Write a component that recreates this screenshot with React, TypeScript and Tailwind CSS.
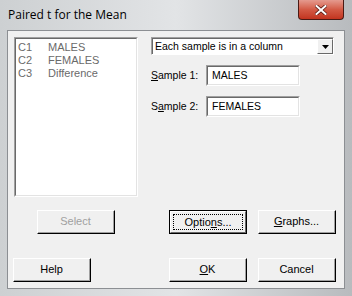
import React from "react";

const FONT = "font-['Liberation_Sans',Tahoma,sans-serif]";

function Btn({
  children,
  className = "",
  focused = false,
  disabled = false,
}: {
  children: React.ReactNode;
  className?: string;
  focused?: boolean;
  disabled?: boolean;
}) {
  return (
    <div
      className={`h-[24px] w-[78px] bg-[#f0f0f0] ${
        focused ? "border border-black" : "border-t border-l border-t-white border-l-white border-r border-b border-r-black border-b-black"
      } ${className}`}
    >
      <div
        className={`flex h-full w-full items-center justify-center ${
          focused
            ? "border-t border-l border-t-white border-l-white border-r border-b border-r-[#696969] border-b-[#696969] p-[2px]"
            : "border-r border-b border-r-[#a0a0a0] border-b-[#a0a0a0]"
        }`}
      >
        <div
          className={`flex h-full w-full items-center justify-center text-[11px] ${
            focused ? "border border-dotted border-black" : ""
          } ${disabled ? "text-[#a0a0a0]" : "text-black"}`}
        >
          {children}
        </div>
      </div>
    </div>
  );
}

function Field({ value }: { value: string }) {
  return (
    <div className="h-[21px] w-[94px] border-t border-l border-t-[#a0a0a0] border-l-[#a0a0a0] border-r border-b border-r-white border-b-white">
      <div className="flex h-full w-full items-center border-t border-l border-t-[#696969] border-l-[#696969] border-r border-b border-r-[#e3e3e3] border-b-[#e3e3e3] bg-white px-[4px] text-[10.5px] text-black">
        {value}
      </div>
    </div>
  );
}

const COLUMNS = [
  ["C1", "MALES"],
  ["C2", "FEMALES"],
  ["C3", "Difference"],
];

export default function App() {
  return (
    <div
      className={`${FONT} flex h-[296px] w-[352px] flex-col overflow-hidden bg-gradient-to-r from-[#cdd0d2] via-[#e2e4e6] to-[#b8bbbe]`}
    >
      {/* Title bar */}
      <div className="relative flex h-[30px] shrink-0 items-start pl-[8px] pt-[7px]">
        <span className="font-['Open_Sans',sans-serif] text-[12px] leading-[16px] text-black">
          Paired t for the Mean
        </span>
        <div className="absolute right-[8px] top-0 flex h-[20px] w-[46px] items-center justify-center rounded-b-[4px] border border-t-0 border-[#4a1a14] bg-gradient-to-b from-[#e49a8e] via-[#d35a45] to-[#c2331e]">
          <svg width="12" height="10" viewBox="0 0 12 10">
            <path d="M1.5 1 L10.5 9 M10.5 1 L1.5 9" stroke="#5a1a12" strokeWidth="3.6" strokeLinecap="square" />
            <path d="M1.5 1 L10.5 9 M10.5 1 L1.5 9" stroke="#ffffff" strokeWidth="2" strokeLinecap="square" />
          </svg>
        </div>
      </div>

      {/* Client area */}
      <div className="mx-[7px] flex-1 border border-[#8c8f93]">
        <div className="flex h-full flex-col bg-[#f0f0f0] pl-[6px] pt-[6px]">
          <div className="flex">
            {/* Column list */}
            <div className="h-[160px] w-[124px] border-t border-l border-t-[#a0a0a0] border-l-[#a0a0a0] border-r border-b border-r-white border-b-white">
              <div className="h-full w-full border-t border-l border-t-[#696969] border-l-[#696969] border-r border-b border-r-[#e3e3e3] border-b-[#e3e3e3] bg-white pl-[2px] pt-[2px]">
                {COLUMNS.map(([c, name]) => (
                  <div key={c} className="flex h-[13px] items-center text-[11px] text-[#6a6a6a]">
                    <span className="w-[30px]">{c}</span>
                    <span>{name}</span>
                  </div>
                ))}
              </div>
            </div>

            {/* Right column */}
            <div className="ml-[13px] flex w-[183px] flex-col">
              <div className="h-[18px] w-[183px] border-t border-l border-t-[#a0a0a0] border-l-[#a0a0a0] border-r border-b border-r-white border-b-white">
                <div className="flex h-full w-full items-center border-t border-l border-t-[#696969] border-l-[#696969] bg-white pl-[2px] text-[10.5px] text-black">
                  <span className="flex-1">Each sample is in a column</span>
                  <div className="flex h-full w-[16px] items-center justify-center border-t border-l border-t-white border-l-white border-r border-b border-r-[#696969] border-b-[#696969] bg-[#f0f0f0]">
                    <svg width="7" height="4" viewBox="0 0 7 4">
                      <path d="M0 0 H7 L3.5 4 Z" fill="#000" />
                    </svg>
                  </div>
                </div>
              </div>

              <div className="mt-[10px] flex items-center">
                <span className="w-[55px] text-[10.5px] text-black">
                  <span className="underline">S</span>ample 1:
                </span>
                <Field value="MALES" />
              </div>
              <div className="mt-[10px] flex items-center">
                <span className="w-[55px] text-[10.5px] text-black">
                  S<span className="underline">a</span>mple 2:
                </span>
                <Field value="FEMALES" />
              </div>
            </div>
          </div>

          {/* Select / Options / Graphs */}
          <div className="mt-[13px] flex">
            <Btn className="ml-[23px]" disabled>
              Select
            </Btn>
            <Btn className="ml-[54px]" focused>
              <span>
                Optio<span className="underline">n</span>s...
              </span>
            </Btn>
            <Btn className="ml-[11px]">
              <span>
                <span className="underline">G</span>raphs...
              </span>
            </Btn>
          </div>

          {/* Help / OK / Cancel */}
          <div className="mt-[24px] flex">
            <Btn className="-ml-[1px]">Help</Btn>
            <Btn className="ml-[78px]">
              <span>
                <span className="underline">O</span>K
              </span>
            </Btn>
            <Btn className="ml-[11px]">Cancel</Btn>
          </div>
        </div>
      </div>
      <div className="h-[7px] shrink-0" />
    </div>
  );
}
